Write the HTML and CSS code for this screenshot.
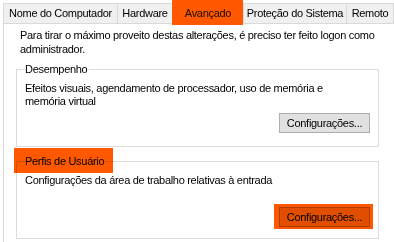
FILE: index.html
```html
<!DOCTYPE html>
<html lang="pt-BR">
<head>
<meta charset="utf-8">
<title>Propriedades do Sistema</title>
<link rel="stylesheet" href="styles.css">
</head>
<body>
<div class="dialog">
  <div class="tabs">
    <div class="tab t1">Nome do Computador</div>
    <div class="tab t2">Hardware</div>
    <div class="tab t3 selected">Avançado</div>
    <div class="tab t4">Proteção do Sistema</div>
    <div class="tab t5">Remoto</div>
  </div>
  <div class="panel">
    <p class="intro">Para tirar o máximo proveito destas alterações, é preciso ter feito logon como<br>administrador.</p>
    <div class="group g1">
      <div class="legend">Desempenho</div>
      <p class="gtext">Efeitos visuais, agendamento de processador, uso de memória e<br>memória virtual</p>
      <div class="actions"><button class="btn">Configurações...</button></div>
    </div>
    <div class="group g2">
      <div class="hl hl-legend"></div>
      <div class="legend">Perfis de Usuário</div>
      <p class="gtext">Configurações da área de trabalho relativas à entrada</p>
      <div class="actions">
        <div class="btnwrap">
          <button class="btn">Configurações...</button>
          <div class="hl hl-btn"></div>
        </div>
      </div>
    </div>
  </div>
</div>
</body>
</html>
```

FILE: styles.css
```css
html, body {
  margin: 0;
  padding: 0;
  background: #ffffff;
}
body {
  width: 394px;
  height: 242px;
  overflow: hidden;
  font-family: "Liberation Sans", Arial, sans-serif;
  font-size: 11px;
  letter-spacing: -0.3px;
  color: #000000;
}
.dialog {
  width: 394px;
  height: 242px;
  overflow: hidden;
}
.tabs {
  display: flex;
  align-items: flex-end;
  height: 23px;
  padding-left: 3px;
}
.tab {
  box-sizing: border-box;
  height: 20px;
  background: #f0f0f0;
  border-top: 1px solid #d9d9d9;
  border-left: 1px solid #d9d9d9;
  text-align: center;
  line-height: 17px;
  padding-top: 1px;
  white-space: nowrap;
}
.t1 { width: 114px; }
.t2 { width: 55px; }
.t3 { width: 71px; }
.t4 { width: 103px; }
.t5 { width: 48px; border-right: 1px solid #d9d9d9; }
.tab.selected {
  height: 25px;
  margin-bottom: -2px;
  position: relative;
  z-index: 1;
  background: #ff5800;
  border-color: #ff5800;
  color: #1a0a00;
  line-height: 17px;
  padding-top: 4px;
}
.tab.selected + .tab {
  border-left-color: #d9d9d9;
}
.panel {
  box-sizing: border-box;
  margin-left: 3px;
  width: 391px;
  height: 220px;
  border-top: 1px solid #d9d9d9;
  border-left: 1px solid #d9d9d9;
  padding: 4px 0 0 16px;
}
.intro {
  margin: 0;
  line-height: 14px;
  white-space: nowrap;
}
.group {
  position: relative;
  box-sizing: border-box;
  width: 363px;
  margin-left: -4px;
  border: 1px solid #dcdcdc;
  padding: 0 8px 0 8px;
}
.g1 {
  margin-top: 13px;
  height: 78px;
}
.g2 {
  margin-top: 14px;
  height: 78px;
}
.legend {
  display: block;
  width: fit-content;
  margin-top: -8px;
  padding: 0 2px 0 0;
  background: #ffffff;
  line-height: 14px;
  position: relative;
  z-index: 1;
}
.gtext {
  margin: 0;
  line-height: 13px;
  white-space: nowrap;
}
.g1 .gtext { margin-top: 6px; }
.g2 .gtext { margin-top: 6px; }
.actions {
  display: flex;
  justify-content: flex-end;
}
.g1 .actions { margin-top: 5px; }
.g2 .actions { margin-top: 20px; }
.btnwrap {
  position: relative;
}
.btn {
  box-sizing: border-box;
  width: 91px;
  height: 20px;
  margin: 0;
  padding: 0;
  background: #e1e1e1;
  border: 1px solid #adadad;
  font-family: "Liberation Sans", Arial, sans-serif;
  font-size: 11px;
  letter-spacing: -0.3px;
  color: #000000;
  display: block;
}
.hl {
  position: absolute;
  background: #ff5800;
  mix-blend-mode: multiply;
  z-index: 2;
}
.hl-legend {
  left: -3px;
  top: -14px;
  width: 99px;
  height: 25px;
}
.hl-btn {
  left: -5px;
  top: -3px;
  width: 99px;
  height: 25px;
}
```
